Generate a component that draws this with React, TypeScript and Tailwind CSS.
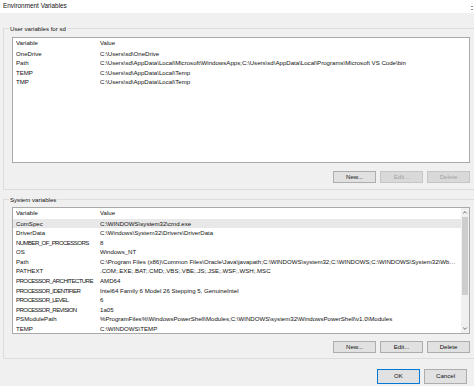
import React from "react"

type Row = { name: string; value: string; selected?: boolean }

const userRows: Row[] = [
  { name: "OneDrive", value: "C:\\Users\\sd\\OneDrive" },
  {
    name: "Path",
    value:
      "C:\\Users\\sd\\AppData\\Local\\Microsoft\\WindowsApps;C:\\Users\\sd\\AppData\\Local\\Programs\\Microsoft VS Code\\bin",
  },
  { name: "TEMP", value: "C:\\Users\\sd\\AppData\\Local\\Temp" },
  { name: "TMP", value: "C:\\Users\\sd\\AppData\\Local\\Temp" },
]

const systemRows: Row[] = [
  { name: "ComSpec", value: "C:\\WINDOWS\\system32\\cmd.exe", selected: true },
  { name: "DriverData", value: "C:\\Windows\\System32\\Drivers\\DriverData" },
  { name: "NUMBER_OF_PROCESSORS", value: "8" },
  { name: "OS", value: "Windows_NT" },
  {
    name: "Path",
    value:
      "C:\\Program Files (x86)\\Common Files\\Oracle\\Java\\javapath;C:\\WINDOWS\\system32;C:\\WINDOWS;C:\\WINDOWS\\System32\\Wbem;C:\\WINDOWS\\System32\\WindowsPowerShell\\v1.0\\",
  },
  { name: "PATHEXT", value: ".COM;.EXE;.BAT;.CMD;.VBS;.VBE;.JS;.JSE;.WSF;.WSH;.MSC" },
  { name: "PROCESSOR_ARCHITECTURE", value: "AMD64" },
  { name: "PROCESSOR_IDENTIFIER", value: "Intel64 Family 6 Model 26 Stepping 5, GenuineIntel" },
  { name: "PROCESSOR_LEVEL", value: "6" },
  { name: "PROCESSOR_REVISION", value: "1a05" },
  {
    name: "PSModulePath",
    value: "%ProgramFiles%\\WindowsPowerShell\\Modules;C:\\WINDOWS\\system32\\WindowsPowerShell\\v1.0\\Modules",
  },
  { name: "TEMP", value: "C:\\WINDOWS\\TEMP" },
]

// Segoe UI capitals are narrower than Arial's, so long all-caps names get tightened
const isLongCaps = (s: string) => /^[A-Z_]+$/.test(s) && s.length > 8

function Button({ label, disabled, primary }: { label: string; disabled?: boolean; primary?: boolean }) {
  return (
    <div
      className={`w-[43px] flex items-center justify-center border ${
        disabled
          ? "bg-[#d9d9d9] border-[#c6c6c6] text-[#a3a3a3]"
          : primary
          ? "bg-[#e1e1e1] border-[#0078d7] text-[#111]"
          : "bg-[#e1e1e1] border-[#adadad] text-[#111]"
      }`}
    >
      {label}
    </div>
  )
}

function VarList({ rows, height, scroll }: { rows: Row[]; height: string; scroll?: boolean }) {
  return (
    <div className={`${height} bg-white border border-[#a9a9a9] flex overflow-hidden`}>
      <div className="flex-1 min-w-0">
        <div className="flex h-[10.5px] items-center">
          <div className="w-[87px] shrink-0 pl-[3px]">Variable</div>
          <div>Value</div>
        </div>
        {rows.map((r, i) => (
          <div key={i} className={`flex h-[9.6px] leading-[9.6px] ${r.selected ? "bg-[#e8e8e8]" : ""}`}>
            <div
              className={`w-[87px] shrink-0 pl-[3px] whitespace-nowrap ${
                isLongCaps(r.name) ? "tracking-[-0.6px]" : ""
              }`}
            >
              {r.name}
            </div>
            <div className="flex-1 min-w-0 whitespace-nowrap overflow-hidden text-ellipsis pr-[4px]">{r.value}</div>
          </div>
        ))}
      </div>
      {scroll && (
        <div className="w-[8px] shrink-0 bg-[#f0f0f0] flex flex-col items-center">
          <svg width="8" height="9" viewBox="0 0 8 9" className="shrink-0">
            <path d="M2.2 5.4 L4 3.6 L5.8 5.4" fill="none" stroke="#606060" strokeWidth="0.9" />
          </svg>
          <div className="w-[6px] h-[78px] bg-[#cdcdcd]" />
          <div className="flex-1" />
          <svg width="8" height="9" viewBox="0 0 8 9" className="shrink-0">
            <path d="M2.2 3.6 L4 5.4 L5.8 3.6" fill="none" stroke="#606060" strokeWidth="0.9" />
          </svg>
        </div>
      )}
    </div>
  )
}

export default function App() {
  return (
    <div className="w-[474px] h-[386px] bg-[#f0f0f0] overflow-hidden text-[6.1px] leading-none text-[#111] font-['Liberation_Sans','Arial',sans-serif]">
      <div className="h-[13px] bg-white flex items-center justify-between pl-[3px] pr-[1px]">
        <span className="text-[6.4px]">Environment Variables</span>
        <div className="flex flex-col gap-[2px] mt-[3px]">
          <div className="w-[2px] h-[1px] bg-[#8a8a8a]" />
          <div className="w-[2px] h-[1px] bg-[#8a8a8a]" />
        </div>
      </div>

      <div className="pl-[3px]">
        <fieldset className="min-w-0 mt-[11px] border border-[#dcdcdc] border-r-0 pl-[8px] pr-[4px] pb-[6px]">
          <legend className="ml-[-3px] px-[1px] h-[9px] leading-[9px]">User variables for sd</legend>
          <div className="mt-[4px]">
            <VarList rows={userRows} height="h-[126px]" />
          </div>
          <div className="mt-[8px] h-[12px] flex justify-end gap-[4px]">
            <Button label="New..." />
            <Button label="Edit..." disabled />
            <Button label="Delete" disabled />
          </div>
        </fieldset>

        <fieldset className="min-w-0 mt-[5px] border border-[#dcdcdc] border-r-0 pl-[8px] pr-[4px] pb-[5px]">
          <legend className="ml-[-3px] px-[1px] h-[9px] leading-[9px]">System variables</legend>
          <div className="mt-[3px]">
            <VarList rows={systemRows} height="h-[127px]" scroll />
          </div>
          <div className="mt-[7px] h-[12px] flex justify-end gap-[4px]">
            <Button label="New..." />
            <Button label="Edit..." />
            <Button label="Delete" />
          </div>
        </fieldset>
      </div>

      <div className="mt-[10px] h-[15px] flex justify-end gap-[4px] pr-[7px]">
        <Button label="OK" primary />
        <Button label="Cancel" />
      </div>
    </div>
  )
}
